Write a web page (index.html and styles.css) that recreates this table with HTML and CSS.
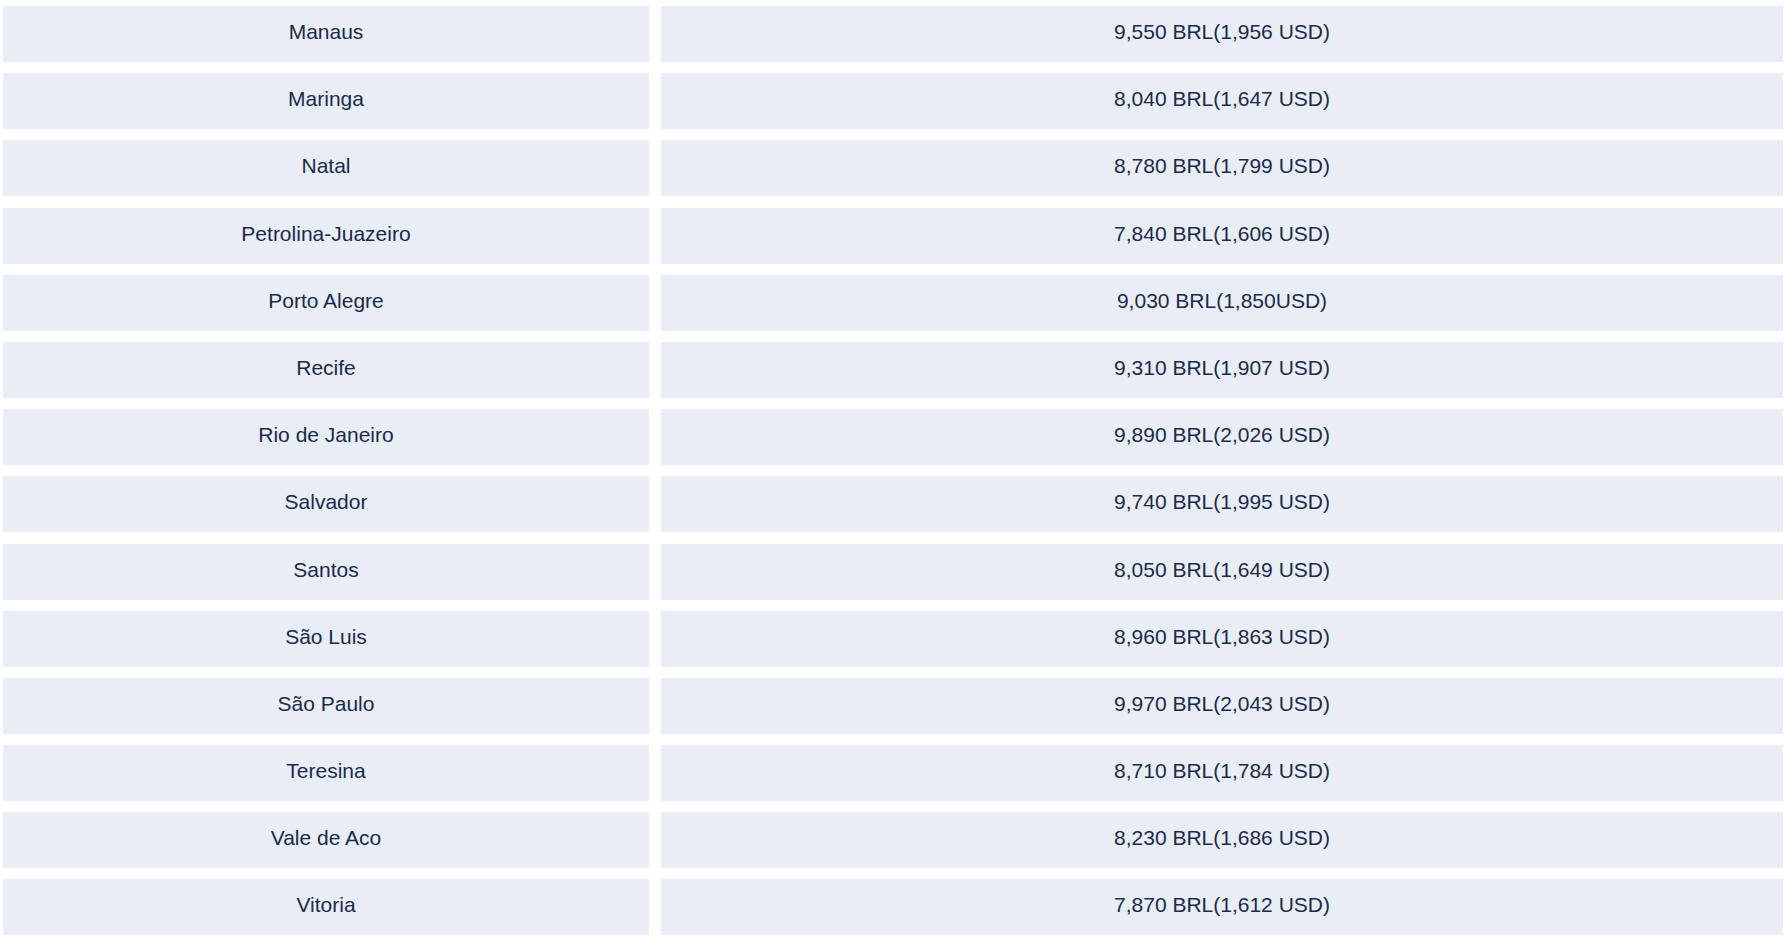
FILE: index.html
```html
<!DOCTYPE html>
<html lang="en">
<head>
<meta charset="utf-8">
<title>Salaries</title>
<link rel="stylesheet" href="styles.css">
</head>
<body>
<div class="table">
  <div class="cell city">Manaus</div><div class="cell value">9,550 BRL(1,956 USD)</div>
  <div class="cell city">Maringa</div><div class="cell value">8,040 BRL(1,647 USD)</div>
  <div class="cell city">Natal</div><div class="cell value">8,780 BRL(1,799 USD)</div>
  <div class="cell city">Petrolina-Juazeiro</div><div class="cell value">7,840 BRL(1,606 USD)</div>
  <div class="cell city">Porto Alegre</div><div class="cell value">9,030 BRL(1,850USD)</div>
  <div class="cell city">Recife</div><div class="cell value">9,310 BRL(1,907 USD)</div>
  <div class="cell city">Rio de Janeiro</div><div class="cell value">9,890 BRL(2,026 USD)</div>
  <div class="cell city">Salvador</div><div class="cell value">9,740 BRL(1,995 USD)</div>
  <div class="cell city">Santos</div><div class="cell value">8,050 BRL(1,649 USD)</div>
  <div class="cell city">São Luis</div><div class="cell value">8,960 BRL(1,863 USD)</div>
  <div class="cell city">São Paulo</div><div class="cell value">9,970 BRL(2,043 USD)</div>
  <div class="cell city">Teresina</div><div class="cell value">8,710 BRL(1,784 USD)</div>
  <div class="cell city">Vale de Aco</div><div class="cell value">8,230 BRL(1,686 USD)</div>
  <div class="cell city">Vitoria</div><div class="cell value">7,870 BRL(1,612 USD)</div>
</div>
</body>
</html>
```
FILE: styles.css
```css
html, body {
  margin: 0;
  padding: 0;
  background: #ffffff;
}
body {
  font-family: "Liberation Sans", Arial, Helvetica, sans-serif;
  color: #1b2a4a;
}
.table {
  display: grid;
  grid-template-columns: 646px 1122px;
  column-gap: 12px;
  row-gap: 11.2px;
  padding: 6px 9px 0 3px;
}
.cell {
  height: 56px;
  background: #e9eef6;
  display: flex;
  align-items: center;
  justify-content: center;
  font-size: 21px;
  line-height: 24px;
  padding-bottom: 4px;
  box-sizing: border-box;
}
```
